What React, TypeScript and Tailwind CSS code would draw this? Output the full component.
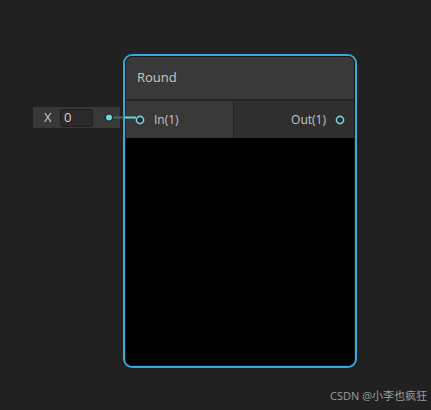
export default function App() {
  return (
    <div
      className="relative h-[410px] w-[431px] overflow-hidden bg-[#212121] text-[#c4c4c4]"
      style={{ fontFamily: '"Open Sans", "Noto Sans", "Noto Sans CJK SC", sans-serif' }}
    >
      {/* input port value field */}
      <div className="absolute left-[33px] top-[107px] flex h-[21px] w-[87px] items-center bg-[#383838]">
        <span className="ml-[11px] w-[16px] text-[13px] leading-none text-[#c8c8c8]">X</span>
        <div className="flex h-[18px] w-[33px] items-center rounded-[3px] border border-[#1e1e1e] bg-[#2a2a2a] pl-[3px] text-[13px] leading-none text-[#d2d2d2]">
          0
        </div>
      </div>

      {/* node */}
      <div className="absolute left-[123px] top-[54px] h-[314px] w-[234px] rounded-[9px] border-2 border-[#3ba6dc]">
        <div className="flex h-full w-full flex-col overflow-hidden rounded-[7px] border border-[#1a1a1a]">
          <div className="flex h-[42px] items-center bg-[#393939] pl-[11px] text-[13px] text-[#c8c8c8]">Round</div>
          <div className="h-[2px] bg-[#262626]" />
          <div className="flex h-[37px]">
            <div className="flex w-[107px] items-center bg-[#383838] pl-[9px]">
              <svg width="10" height="10" viewBox="0 0 10 10">
                <circle cx="5" cy="5" r="3.6" fill="#2a2a2a" stroke="#6fd3da" strokeWidth="1.6" />
              </svg>
              <span className="ml-[9px] text-[12px] text-[#c4c4c4]">In(1)</span>
            </div>
            <div className="w-px bg-[#242424]" />
            <div className="flex flex-1 items-center justify-end bg-[#2f2f2f] pr-[9px]">
              <span className="text-[12px] text-[#c4c4c4]">Out(1)</span>
              <svg className="ml-[9px]" width="10" height="10" viewBox="0 0 10 10">
                <circle cx="5" cy="5" r="3.6" fill="#2a2a2a" stroke="#6fd3da" strokeWidth="1.6" />
              </svg>
            </div>
          </div>
          <div className="flex-1 bg-black" />
        </div>
      </div>

      {/* edge from field to port, drawn over the node border */}
      <svg className="absolute left-[100px] top-[108px]" width="36" height="20" viewBox="0 0 36 20">
        <line x1="9" y1="9.5" x2="24" y2="9.5" stroke="#46696b" strokeWidth="2" />
        <line x1="24" y1="9.5" x2="36" y2="9.5" stroke="#6fd3da" strokeWidth="2" />
        <circle cx="9" cy="9.5" r="3.6" fill="#6fd3da" stroke="#1a2a2b" strokeWidth="1.2" />
      </svg>

      <div className="absolute bottom-[6px] right-[4px] text-[11px] text-[#9c9c9c]">CSDN @小李也疯狂</div>
    </div>
  );
}
